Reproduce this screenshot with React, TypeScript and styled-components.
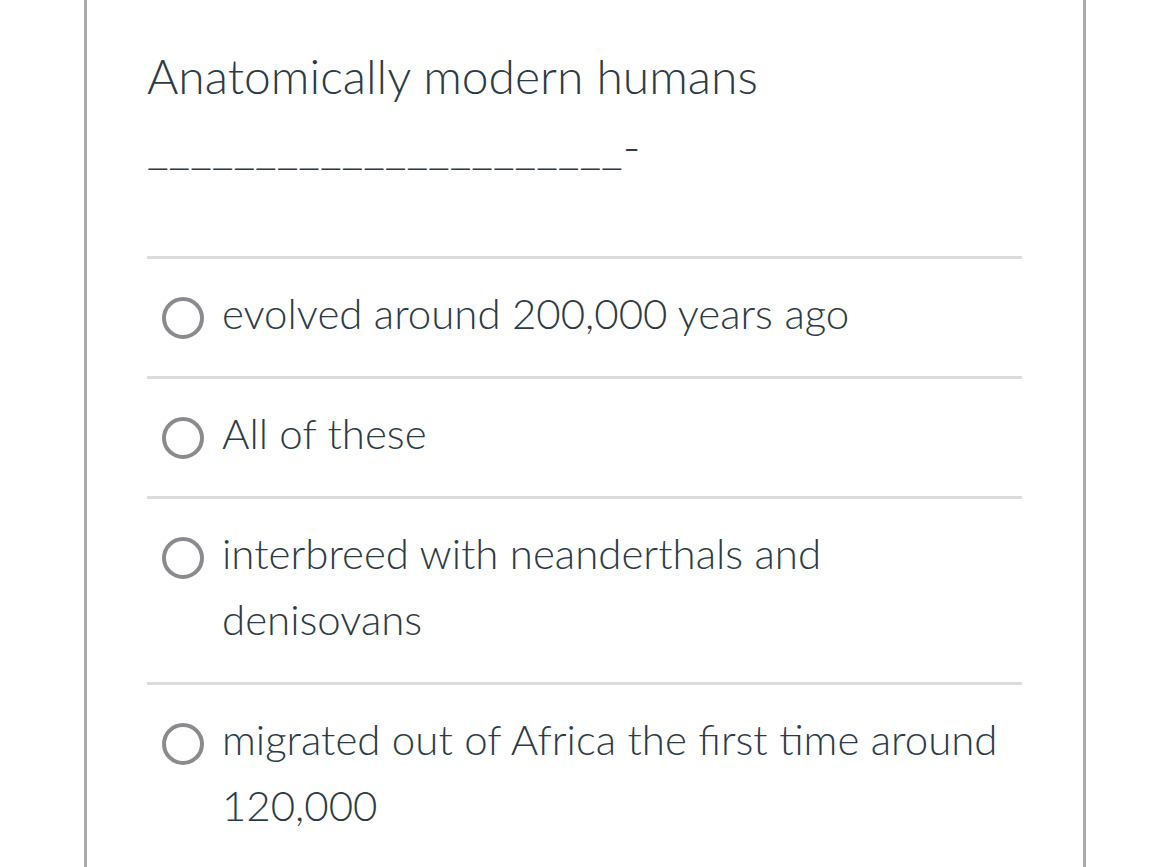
import React from 'react';
import styled, { createGlobalStyle } from 'styled-components';

const GlobalStyle = createGlobalStyle`
  html, body {
    margin: 0;
    padding: 0;
    background: #ffffff;
  }

  body {
    font-family: Lato, "Open Sans", "Liberation Sans", sans-serif;
    color: #2d3b45;
  }
`;

const Page = styled.div`
  width: 100%;
  height: 867px;
  overflow: hidden;
  background: #ffffff;
`;

const QuestionCard = styled.div`
  box-sizing: border-box;
  margin-left: 84px;
  width: 1002px;
  height: 100%;
  padding: 0 61px 0 60px;
  border-left: 3px solid #aaaaaa;
  border-right: 3px solid #aaaaaa;
`;

const QuestionText = styled.p`
  margin: 0;
  padding-top: 41px;
  padding-bottom: 75px;
  font-size: 48px;
  line-height: 70px;
  font-weight: 300;
`;

const AnswerList = styled.div`
  display: flex;
  flex-direction: column;
`;

const AnswerRow = styled.label`
  display: flex;
  align-items: flex-start;
  gap: 18px;
  padding: 21px 0 30px 15px;
  border-top: 3px solid #dcdcdc;
`;

const Radio = styled.span`
  flex: none;
  box-sizing: border-box;
  width: 42px;
  height: 42px;
  margin-top: 17px;
  border: 4px solid #8b8b8f;
  border-radius: 50%;
`;

const AnswerText = styled.span`
  font-size: 42px;
  line-height: 66px;
  font-weight: 300;
`;

const answers = [
  'evolved around 200,000 years ago',
  'All of these',
  'interbreed with neanderthals and denisovans',
  'migrated out of Africa the first time around 120,000',
];

const App = () => {
  return (
    <Page>
      <GlobalStyle />
      <QuestionCard>
        <QuestionText>
          Anatomically modern humans
          <br />
          ______________________-
        </QuestionText>
        <AnswerList>
          {answers.map((answer) => (
            <AnswerRow key={answer}>
              <Radio />
              <AnswerText>{answer}</AnswerText>
            </AnswerRow>
          ))}
        </AnswerList>
      </QuestionCard>
    </Page>
  );
};

export default App;
